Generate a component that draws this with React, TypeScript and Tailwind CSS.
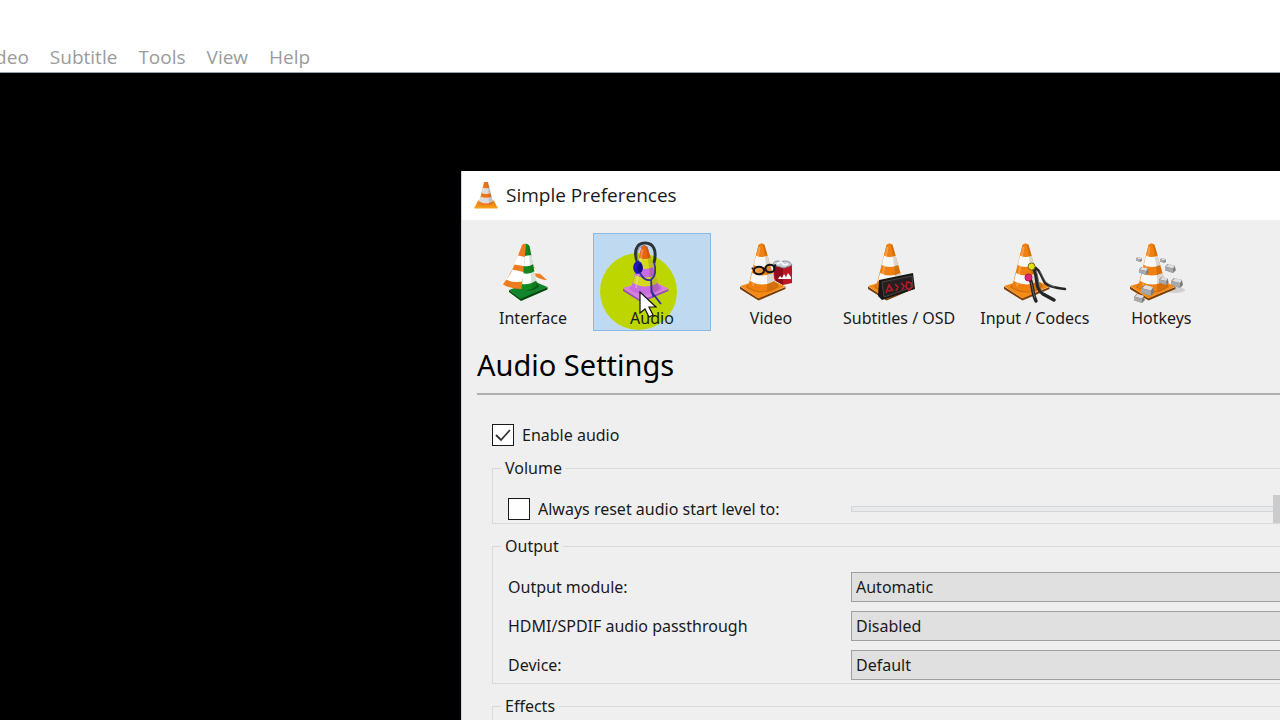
import { useState } from "react";
import type { ReactNode } from "react";

const menus = ["Video", "Subtitle", "Tools", "View", "Help"];

const outputRows = [
  {
    id: "module",
    label: "Output module:",
    options: ["Automatic", "DirectX audio output", "WaveOut audio output"],
  },
  {
    id: "passthrough",
    label: "HDMI/SPDIF audio passthrough",
    options: ["Disabled", "Enabled"],
  },
  { id: "device", label: "Device:", options: ["Default"] },
];

type ConeProps = {
  main?: string;
  stripe?: string;
  base?: string;
  edge?: string;
  tip?: string;
};

function Cone({
  main = "#f0800f",
  stripe = "#f8f8f8",
  base = "#f58a14",
  edge = "#7c3d08",
  tip = main,
}: ConeProps) {
  return (
    <g>
      <path d="M1 44.500 19 56l27.500-11v2L19.500 58.500 1 47z" fill={edge} />
      <path d="M1 44 28 36l18.500 8.500L19.500 56.500z" fill={base} />
      <path d="M7 45Q22 56 40 45L38 41H10z" fill={edge} opacity=".35" />
      <path
        d="M19.500 3Q22.500 0 25.500 3L37.500 45Q24 54 9 45z"
        fill={main}
      />
      <path
        d="M19.500 3Q22.500 0 25.500 3L28.700 14Q23 17 17 14z"
        fill={tip}
      />
      <path
        d="M17 13.500Q22.500 16.500 28.500 13.500L31.200 23Q23 27 14.800 23z"
        fill={stripe}
      />
      <path
        d="M13 31Q22.500 36 33.500 31L35.800 39Q23 46 11 39z"
        fill={stripe}
      />
      <path
        d="M25.500 3 37.500 45Q33 49 28 49.500Q29 25 23.500 2z"
        fill="#402000"
        opacity=".16"
      />
      <path
        d="M20.500 5 14 44"
        stroke="#fff"
        strokeWidth="2"
        opacity=".25"
        fill="none"
      />
    </g>
  );
}

function Icon({ children }: { children: ReactNode }) {
  return (
    <svg
      viewBox="0 0 64 64"
      className="relative size-16 overflow-visible"
      aria-hidden="true"
    >
      {children}
    </svg>
  );
}

function InterfaceIcon() {
  return (
    <Icon>
      <path d="M31 20c3 8 8 12 15 18-5 0-9-2-12-4z" fill="#ee7c20" />
      <path d="M32 23c2 4 5 6 7 9l-6-1z" fill="#fafafa" />
      <path d="M8 48 19 56l27.500-11v2.500L20 59 8 50z" fill="#06470b" />
      <path d="m8 48 24-9 14.500 6L19.500 57z" fill="#12852c" />
      <path d="M22 47q8 4 16-2l-2-5z" fill="#075d14" />
      <path d="M23.500 2q3-1 5 2L36 43q-6 7-16 4z" fill="#128a22" />
      <path
        d="m23.500 14 7-1 1.800 9q-4 3-9.300 2zM22 31q6 2 11.700-2l1.800 9.500Q29 43 21 42z"
        fill="#fff"
      />
      <path d="m29 5 7 38-5 4-4-44z" fill="#003008" opacity=".15" />
      <path
        d="M21 3q2-2 4-1L22.500 28 20.500 47Q10 47 2 42.500 11 30 15 19z"
        fill="#ee7c20"
      />
      <path d="m17 13.500 7 1.500-1 9-10-1.500z" fill="#fff" />
      <path
        d="m11.500 27.500 11 2.500-1 9.500Q12 41 5 37.500q4-4 6.500-10z"
        fill="#fff"
      />
    </Icon>
  );
}

function AudioIcon() {
  return (
    <Icon>
      <g transform="translate(2 2)">
        <Cone
          main="#c76de0"
          stripe="#d5d91c"
          base="#dc7ce6"
          edge="#9a4fc0"
          tip="#e8640c"
        />
      </g>
      <path
        d="M18 22C13 10 16 1 25 1s12 8 9 20"
        fill="none"
        stroke="#2c3238"
        strokeWidth="3"
      />
      <path
        d="M19 22C15 11 18 4 25 3"
        fill="none"
        stroke="#7c858c"
        strokeWidth="1"
      />
      <ellipse cx="18" cy="25.500" rx="4.800" ry="6.500" fill="#1d18bb" />
      <ellipse cx="20" cy="26" rx="2.500" ry="4.500" fill="#120d86" />
      <path
        d="M34 20c2 7 2 14-3 18-5 1-9-3-11-7M31 38c1 6-1 12 3 17M31 49l10 13"
        fill="none"
        stroke="#34309c"
        strokeWidth="1.800"
      />
    </Icon>
  );
}

function VideoIcon() {
  return (
    <Icon>
      <path d="m34 24 19-2v19l-9 2-9-5z" fill="#bd1625" />
      <path d="m34 24 3 15 7 4V25z" fill="#8e0d1a" />
      <path
        d="M34 23c0-4 5-5 8-3 4-2 9-1 11 3l-8 3z"
        fill="#c9d0d8"
        stroke="#87909a"
      />
      <path
        d="m38 22 4-2 3 3 4-1"
        fill="none"
        stroke="#fff"
        strokeWidth="1.500"
      />
      <path d="m39 37 2-3 2 2 2-4 2 3 2-4 3 4v2z" fill="#fff" />
      <Cone />
      <g fill="#ffffff33" stroke="#151515" strokeWidth="2">
        <ellipse cx="20" cy="28.500" rx="5" ry="3.800" />
        <ellipse cx="31" cy="26.500" rx="4.500" ry="3.800" />
        <path d="m14 26-1 1M35 24l2-1M25 27h2" />
      </g>
    </Icon>
  );
}

function SubtitlesIcon() {
  return (
    <Icon>
      <Cone />
      <path d="m12 38 34-7 2 16-33 11-4-4z" fill="#171717" />
      <path d="m15 40 30-6 1 11-29 10z" fill="#242021" stroke="#494342" />
      <path
        d="m19 51 3-8 4 6m-5 0 4-1m3-6 3 3-2 4m5-8 3 3-2 4m5-8 4 1 1 4-3 3-3-3z"
        fill="none"
        stroke="#b91a24"
        strokeWidth="1.600"
      />
    </Icon>
  );
}

function CodecsIcon() {
  return (
    <Icon>
      <Cone />
      <g fill="none" stroke="#252525" strokeLinecap="round">
        <path d="M30 25c7 1 8 10 12 16 4 4 11 5 20 6" strokeWidth="2.500" />
        <path d="M31 27c4 8 1 20 9 25l11 6" strokeWidth="3.500" />
        <path d="M27 37c3 6 2 14 6 22" strokeWidth="3.500" />
      </g>
      <g fill="none" stroke="#888" opacity=".65">
        <path d="M33 29c4 8 1 17 8 22M28 40c2 6 2 11 4 16M37 29c4 9 7 14 15 16" />
      </g>
      <circle cx="28.500" cy="24.500" r="3.500" fill="#e4df18" stroke="#716d10" />
      <circle cx="25.500" cy="35.500" r="3.500" fill="#e52379" stroke="#a51151" />
    </Icon>
  );
}

function Keycap({ x, y, size }: { x: number; y: number; size: number }) {
  return (
    <g transform={`translate(${x} ${y}) scale(${size})`}>
      <path d="m0 3 3-3 8 2 1 5-3 3-9-3z" fill="#7b7b7b" />
      <path d="m1 3 3-3 7 2-2 3z" fill="#dedede" />
      <path d="m0 3 9 2v5L0 7z" fill="#a9a9a9" />
    </g>
  );
}

function HotkeysIcon() {
  return (
    <Icon>
      <ellipse cx="46" cy="48" rx="10" ry="3" fill="#cfcfcf" />
      <Cone />
      <Keycap x={7} y={15} size={0.5} />
      <Keycap x={31} y={16} size={0.5} />
      <Keycap x={36} y={22} size={0.9} />
      <Keycap x={10} y={25} size={0.8} />
      <Keycap x={30} y={35} size={0.8} />
      <Keycap x={42} y={36} size={1} />
      <Keycap x={12} y={43} size={1.1} />
      <Keycap x={5} y={52} size={0.9} />
    </Icon>
  );
}

const categories = [
  { name: "Interface", icon: <InterfaceIcon /> },
  { name: "Audio", icon: <AudioIcon /> },
  { name: "Video", icon: <VideoIcon /> },
  { name: "Subtitles / OSD", icon: <SubtitlesIcon /> },
  { name: "Input / Codecs", icon: <CodecsIcon /> },
  { name: "Hotkeys", icon: <HotkeysIcon /> },
];

function Pointer() {
  return (
    <svg
      viewBox="0 0 18 28"
      className="absolute left-[45px] top-[57px] h-7 w-[18px]"
      aria-hidden="true"
    >
      <path
        d="M1 1v21l5-4 4 8 4-2-4-8h7z"
        fill="#fff"
        stroke="#111"
        strokeWidth="1.200"
      />
    </svg>
  );
}

type CheckboxProps = {
  label: string;
  checked: boolean;
  onChange: (checked: boolean) => void;
};

function Checkbox({ label, checked, onChange }: CheckboxProps) {
  return (
    <label className="flex items-center gap-2">
      <span className="relative size-[22px]">
        <input
          type="checkbox"
          checked={checked}
          onChange={(e) => onChange(e.target.checked)}
          className="block size-full appearance-none border border-[#1a1a1a] bg-white"
        />
        {checked && (
          <svg
            viewBox="0 0 22 22"
            className="pointer-events-none absolute inset-0"
            aria-hidden="true"
          >
            <path
              d="m4 11 5 5 9-10"
              fill="none"
              stroke="#333"
              strokeWidth="1.800"
            />
          </svg>
        )}
      </span>
      {label}
    </label>
  );
}

export default function App() {
  const [category, setCategory] = useState("Audio");
  const [enabled, setEnabled] = useState(true);
  const [resetLevel, setResetLevel] = useState(false);
  const [level, setLevel] = useState(100);

  return (
    <div className="flex h-screen flex-col overflow-hidden bg-black font-['Noto_Sans',sans-serif] text-base text-[#1a1a1a]">
      {/* Player menu bar */}
      <header className="shrink-0 border-b border-gray-400 bg-white pt-[42px]">
        <nav className="-ml-[21px] flex h-[30px] items-center gap-[21px] font-['Open_Sans',sans-serif] text-[19px] text-[#9b9b9b]">
          {menus.map((menu) => (
            <button key={menu}>{menu}</button>
          ))}
        </nav>
      </header>

      {/* Preferences window */}
      <main className="flex min-h-0 flex-1 pl-[461px] pt-[98px]">
        <section className="-mr-4 flex min-w-0 flex-1 flex-col border-l border-gray-300 bg-[#efefef]">
          <div className="flex h-[49px] shrink-0 items-center gap-2 bg-white pl-3 font-['Open_Sans',sans-serif] text-[19px]">
            <svg viewBox="0 0 48 56" className="h-7 w-6" aria-hidden="true">
              <path d="m8 37-7 15h46l-7-15z" fill="#f58a14" />
              <path d="M1 49h46v4H1z" fill="#f9a01b" />
              <path d="M20 1q4-4 8 0l10 41q-14 8-28 0z" fill="#ee741b" />
              <path
                d="M17 11q7 3 14 0l3 11q-10 4-20 0zM13 29q11 5 22 0l3 10q-14 8-28 0z"
                fill="#dcdcdc"
              />
              <path d="M28 1 38 42q-4 2-8 3Q30 20 25 0z" fill="#555" opacity=".2" />
            </svg>
            <h1>Simple Preferences</h1>
          </div>

          <div className="flex shrink-0 gap-px pl-3 pt-[13px]">
            {categories.map(({ name, icon }) => (
              <button
                key={name}
                onClick={() => setCategory(name)}
                className={`relative flex h-[98px] min-w-[118px] flex-col items-center border px-[11px] pt-2 whitespace-nowrap ${
                  category === name
                    ? "border-[#8ab9e6] bg-[#bfdaf0]"
                    : "border-transparent"
                }`}
              >
                {name === "Audio" && (
                  <span className="absolute left-[6px] top-[19px] size-[77px] rounded-full bg-[#bed600]" />
                )}
                {icon}
                <span className="relative leading-6">{name}</span>
                {name === "Audio" && <Pointer />}
              </button>
            ))}
          </div>

          <div className="pl-[15px]">
            <h2 className="border-b-2 border-[#b0b0b0] pb-2 pt-3.5 text-[29px] leading-10 text-black">
              {category} Settings
            </h2>

            <div className="flex flex-col pl-[15px] pt-7">
              <Checkbox
                label="Enable audio"
                checked={enabled}
                onChange={setEnabled}
              />

              <fieldset className="mt-[9px] border border-[#dadada] pl-[15px] pr-1.5">
                <legend className="-ml-[7px] px-1 leading-6">Volume</legend>
                <div className="grid grid-cols-[343px_1fr] items-center pt-[15px]">
                  <Checkbox
                    label="Always reset audio start level to:"
                    checked={resetLevel}
                    onChange={setResetLevel}
                  />
                  <input
                    type="range"
                    aria-label="Audio start level"
                    value={level}
                    onChange={(e) => setLevel(Number(e.target.value))}
                    className="h-7 w-full appearance-none bg-transparent [&::-webkit-slider-runnable-track]:h-1.5 [&::-webkit-slider-runnable-track]:border [&::-webkit-slider-runnable-track]:border-[#d6d6d6] [&::-webkit-slider-runnable-track]:bg-[#e7eaea] [&::-webkit-slider-thumb]:-mt-3 [&::-webkit-slider-thumb]:h-7 [&::-webkit-slider-thumb]:w-[15px] [&::-webkit-slider-thumb]:appearance-none [&::-webkit-slider-thumb]:bg-[#cbcbcb]"
                  />
                </div>
              </fieldset>

              <fieldset className="mt-2.5 border border-[#dadada] pb-[3px] pl-[15px] pr-1.5">
                <legend className="-ml-[7px] px-1 leading-6">Output</legend>
                <div className="flex flex-col gap-[9px] pt-3.5">
                  {outputRows.map((row) => (
                    <div
                      key={row.id}
                      className="grid grid-cols-[343px_1fr] items-center"
                    >
                      <label htmlFor={row.id}>{row.label}</label>
                      <select
                        id={row.id}
                        className="h-[30px] w-full appearance-none border border-[#a0a0a0] bg-[#e0e0e0] px-1"
                      >
                        {row.options.map((option) => (
                          <option key={option}>{option}</option>
                        ))}
                      </select>
                    </div>
                  ))}
                </div>
              </fieldset>

              <fieldset className="mt-2.5 h-40 border border-[#dadada] pl-[15px]">
                <legend className="-ml-[7px] px-1 leading-6">Effects</legend>
              </fieldset>
            </div>
          </div>
        </section>
      </main>
    </div>
  );
}
